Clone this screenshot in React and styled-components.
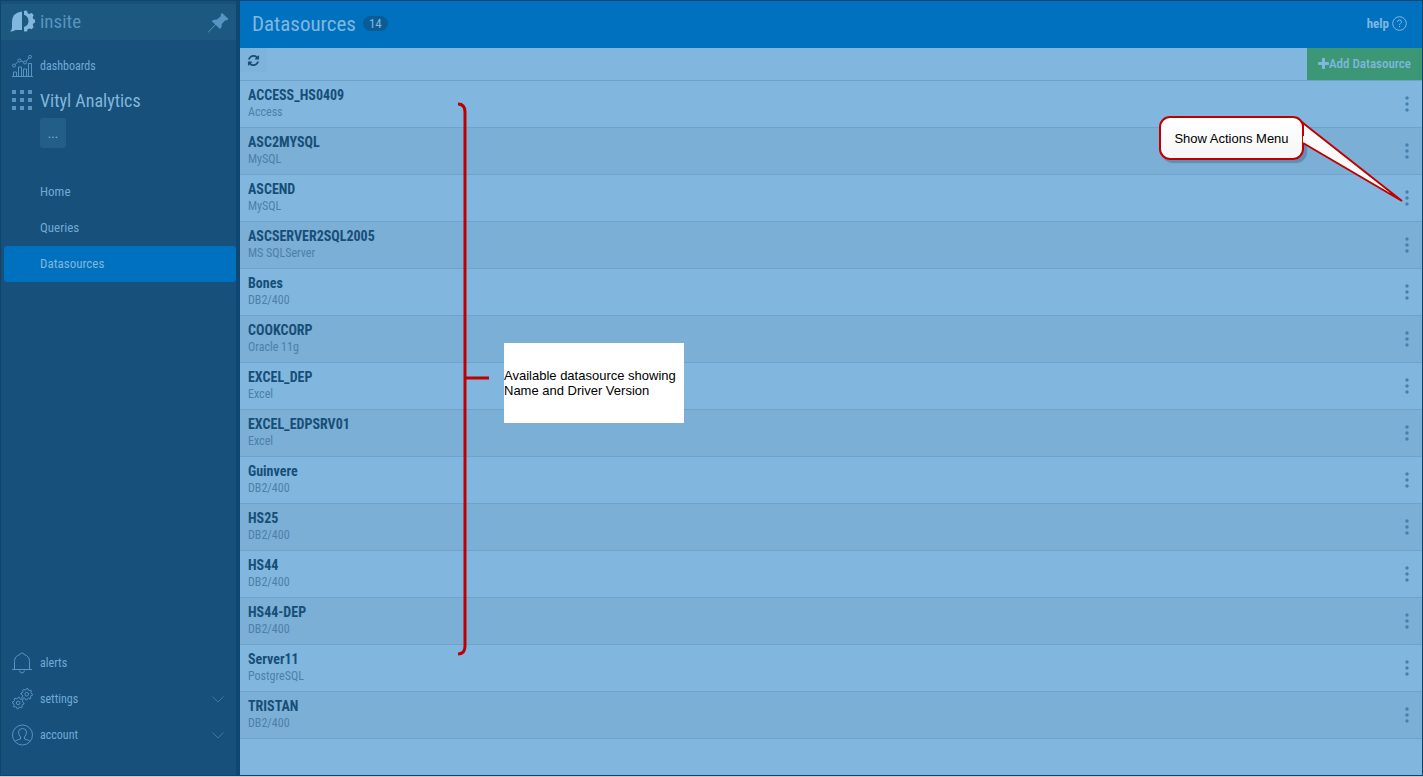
import React from "react";
import styled, { createGlobalStyle } from "styled-components";

const c = {
  side: "#17507a", sideTop: "#1c5880", edge: "#0e4771", frame: "#0f456b",
  blue: "#0071bf", body: "#81b7de", alt: "#7bafd5", line: "#6fa3cb",
  ink: "#174e78", sub: "#4c80a9", pale: "#6fabd7", light: "#81b7de",
  dim: "#5794c1", red: "#c00000", green: "#3b9775",
};

const Global = createGlobalStyle`
  *, *::before, *::after { box-sizing: border-box; }
  body { margin: 0; background: #c8c8c8; font-family: "Roboto Condensed", "Liberation Sans Narrow", "Liberation Sans", sans-serif; font-size: 13px; color: ${c.ink}; }
  button { font: inherit; color: inherit; border: 0; padding: 0; background: none; cursor: pointer; }
  a { color: inherit; text-decoration: none; }
  h1, h2, h3, p, ul { margin: 0; padding: 0; }
  svg { display: block; flex: none; }
`;

const Shell = styled.div`
  display: flex;
  min-height: calc(100vh - 1px);
  border: 1px solid ${c.frame};
  border-width: 1px 1px 1px 0;
`;

const Sidebar = styled.aside`
  width: 240px;
  flex: none;
  display: flex;
  flex-direction: column;
  background: ${c.side};
  border-left: 1px solid ${c.frame};
  border-right: 4px solid ${c.edge};
  color: ${c.pale};
`;

const Brand = styled.div`
  height: 39px;
  display: flex;
  align-items: center;
  gap: 5px;
  padding: 0 7px 0 9px;
  border-top: 3px solid ${c.side};
  background: ${c.sideTop};
  font-size: 19px;
  line-height: 22px;
  color: ${c.dim};
`;

const Pin = styled.button`
  margin-left: auto;
`;

const MainNav = styled.nav`
  padding-top: 8px;
  flex: 1;
`;

const NavItem = styled.a`
  display: flex;
  align-items: center;
  gap: 6px;
  height: 36px;
  padding: 0 12px 0 11px;
  font-size: 12px;
  svg { color: ${c.dim}; }
  svg:nth-of-type(2) { margin-left: auto; }
`;

const Product = styled(NavItem)`
  height: 34px;
  padding-bottom: 2px;
  font-size: 18px;
  color: ${c.light};
`;

const MoreButton = styled.button`
  display: block;
  width: 26px;
  height: 30px;
  margin: 0 0 26px 39px;
  border-radius: 3px;
  background: #225e88;
  color: ${c.light};
`;

const SubItem = styled.a`
  display: flex;
  align-items: center;
  height: 36px;
  margin: 0 0 0 3px;
  padding: 0 36px 2px;
  border-radius: 3px;
  background: ${(p) => (p.$active ? c.blue : "transparent")};
  color: ${(p) => (p.$active ? c.light : c.pale)};
`;

const FootNav = styled.nav`
  padding-bottom: 22px;
`;

const Main = styled.main`
  flex: 1;
  min-width: 0;
  display: flex;
  flex-direction: column;
  background: ${c.body};
`;

const Header = styled.header`
  height: 47px;
  display: flex;
  align-items: center;
  padding: 0 15px 2px 12px;
  background: ${c.blue};
  color: ${c.light};
`;

const Title = styled.h1`
  font-size: 21px;
  line-height: 24px;
  font-weight: 400;
`;

const Count = styled.span`
  margin-left: 7px;
  padding: 0 6px;
  border-radius: 8px;
  line-height: 15px;
  background: #0b5c95;
`;

const Help = styled.a`
  margin-left: auto;
  display: flex;
  align-items: center;
  gap: 3px;
  font-weight: 700;
`;

const Toolbar = styled.div`
  display: flex;
  justify-content: space-between;
  height: 33px;
  border-bottom: 1px solid ${c.line};
`;

const Refresh = styled.button`
  width: 27px;
  height: 24px;
  display: flex;
  align-items: center;
  justify-content: center;
  background: #7eb4db;
  color: ${c.ink};
`;

const AddButton = styled.button`
  display: flex;
  align-items: center;
  padding: 0 11px 2px;
  background: ${c.green};
  color: ${c.light};
  font-weight: 500;
`;

const Stage = styled.div`
  position: relative;
  flex: 1;
`;

const List = styled.ul`
  list-style: none;
`;

const Row = styled.li`
  display: flex;
  align-items: center;
  justify-content: space-between;
  height: 47px;
  padding: 0 8px;
  border-bottom: 1px solid ${c.line};
  &:nth-child(even) { background: ${c.alt}; }
`;

const Source = styled.div`
  padding-bottom: 2px;
`;

const Name = styled.h2`
  font-size: 14px;
  line-height: 17px;
  font-weight: 700;
`;

const Driver = styled.p`
  font-size: 12px;
  line-height: 16px;
  color: ${c.sub};
`;

const Actions = styled.button`
  width: 14px;
  height: 24px;
  display: flex;
  align-items: center;
  justify-content: center;
  color: #4680ac;
`;

const Bracket = styled.svg`
  position: absolute;
  left: 216px;
  top: 21px;
`;

const Note = styled.p`
  position: absolute;
  left: 264px;
  top: 262px;
  width: 180px;
  height: 80px;
  padding-top: 25px;
  background: #fff;
  color: #000;
  font: 13px/15px "Liberation Sans", Arial, sans-serif;
  white-space: nowrap;
`;

const Callout = styled.div`
  position: absolute;
  right: 118px;
  top: 35px;
  width: 145px;
  height: 44px;
  display: flex;
  align-items: center;
  justify-content: center;
  border: 2px solid ${c.red};
  border-radius: 11px;
  background: linear-gradient(#fff, #f6f6f6);
  box-shadow: 3px 3px 1px rgba(40, 80, 115, 0.35);
  color: #000;
  font: 13px/15px "Liberation Sans", Arial, sans-serif;
  white-space: nowrap;
`;

const Tail = styled.svg`
  position: absolute;
  right: 18px;
  top: 39px;
`;

const Logo = () => (
  <svg width="25" height="24" viewBox="0 0 25 24" fill={c.light} aria-hidden="true">
    <path d="M12 1.500V20H5.500Q3 21.500 0 21.500q2-1.500 2-4V11.500Q2.500 2.500 12 1.500z" />
    <path d="M14 1q2.500-1 3.200.3l.5 1.900 1.700.7 2-.9q1.800.8 2.200 2.300l-.9 1.900.6 1.700 1.500.6q.7 1.500 0 3.300l-1.500.6-.6 1.700.9 2q-.6 1.500-2.200 2.200l-2-.8-1.700.7-.6 2q-1.500.8-3.100 0v-4.200q4.500-1.500 4.500-6t-4.500-6.200z" />
  </svg>
);

const PinIcon = () => (
  <svg width="21" height="21" viewBox="0 0 21 21" aria-hidden="true">
    <path d="M0 20.500L8 12" stroke="currentColor" />
    <path fill="currentColor" d="M14 1l6.500 6-2 1.500-1.200-.3-3.500 3.800q.6 3-1.800 5L3.500 9Q6 7 9 7.500l4-3.600-.4-1.300z" />
  </svg>
);

const Outline = ({ children, size = 22 }) => (
  <svg width={size} height={size} viewBox="0 0 22 22" fill="none" stroke="currentColor" strokeWidth="1" aria-hidden="true">
    {children}
  </svg>
);

const ChartIcon = () => (
  <Outline>
    <path d="M0 21.500h21M1.500 21v-4h3v4M6.500 21v-9h3v9M11.500 21v-7h3v7M16.500 21V8.500h3V21M3.200 9.500l3-3M9 6l2.500 1M14 6.500l3-3.500" />
    <circle cx="2" cy="10.500" r="1.500" /><circle cx="7.500" cy="5.500" r="1.500" /><circle cx="13" cy="7.500" r="1.500" /><circle cx="18" cy="1.800" r="1.500" />
  </Outline>
);

const GridIcon = () => (
  <svg width="22" height="22" viewBox="0 0 22 22" fill="currentColor" aria-hidden="true">
    {[1, 9, 17].map((y) => [0, 8, 16].map((x) => <rect key={x + "-" + y} x={x} y={y} width="4" height="4" />))}
  </svg>
);

const BellIcon = () => (
  <Outline>
    <path d="M0 17.500h20M2.500 17.500V9.500Q2.500 4 8 2.500 8 1 10 1t2 1.500q5.500 1.500 5.500 7v8M7.500 18.500q.5 2.500 2.500 2.500t2.500-2.500" />
  </Outline>
);

const gear = Array.from({ length: 32 }, (_, i) => {
  const r = i % 4 < 2 ? 5.8 : 4.4;
  const a = (i * Math.PI) / 16;
  return `${(r * Math.cos(a)).toFixed(2)},${(r * Math.sin(a)).toFixed(2)}`;
}).join(" ");

const GearsIcon = () => (
  <Outline>
    <g transform="translate(14.700 6.200)"><polygon points={gear} /><circle r="1.800" /></g>
    <g transform="translate(6.200 15)"><polygon points={gear} /><circle r="1.800" /></g>
  </Outline>
);

const UserIcon = () => (
  <Outline>
    <circle cx="10.500" cy="11" r="10" />
    <path d="M3 17.500q1-1.500 5.500-2.500v-2Q6.500 11 6.500 8q0-3.500 4-3.500t4 3.500q0 3-2 5v2q4.500 1 5.500 2.500" />
  </Outline>
);

const Chevron = () => (
  <svg width="12" height="7" viewBox="0 0 12 7" fill="none" stroke="#3b78a5" aria-hidden="true">
    <path d="M.5.500L6 6 11.500.500" />
  </svg>
);

const RefreshIcon = () => (
  <svg width="13" height="13" viewBox="0 0 1792 1792" fill="currentColor" aria-hidden="true">
    <path d="M1639 1056q0 5-1 7-64 268-268 434.500t-478 166.500q-146 0-282.500-55t-243.500-157l-129 129q-19 19-45 19t-45-19-19-45v-448q0-26 19-45t45-19h448q26 0 45 19t19 45-19 45l-137 137q71 66 161 102t187 36q134 0 250-65t186-179q11-17 53-117 8-23 30-23h192q13 0 22.500 9.500t9.500 22.500zm25-800v448q0 26-19 45t-45 19h-448q-26 0-45-19t-19-45 19-45l138-138q-148-137-349-137-134 0-250 65t-186 179q-11 17-53 117-8 23-30 23h-199q-13 0-22.500-9.500t-9.500-22.500v-7q65-268 270-434.500t480-166.500q146 0 284 55.500t245 156.500l130-129q19-19 45-19t45 19 19 45z" />
  </svg>
);

const PlusIcon = () => (
  <svg width="11" height="11" viewBox="192 128 1408 1408" fill="currentColor" aria-hidden="true">
    <path d="M1600 736v192q0 40-28 68t-68 28h-416v416q0 40-28 68t-68 28h-192q-40 0-68-28t-28-68v-416h-416q-40 0-68-28t-28-68v-192q0-40 28-68t68-28h416v-416q0-40 28-68t68-28h192q40 0 68 28t28 68v416h416q40 0 68 28t28 68z" />
  </svg>
);

const HelpIcon = () => (
  <svg width="15" height="15" viewBox="0 0 15 15" fill="none" stroke="currentColor" aria-hidden="true">
    <circle cx="7.500" cy="7.500" r="6.800" />
    <path d="M5.500 6q0-2 2-2t2 1.800q0 1-1 1.500t-1 1.700M7.500 10v1.200" />
  </svg>
);

const DotsIcon = () => (
  <svg width="4" height="16" viewBox="0 0 4 16" fill="currentColor" aria-hidden="true">
    <circle cx="2" cy="2" r="1.700" /><circle cx="2" cy="8" r="1.700" /><circle cx="2" cy="14" r="1.700" />
  </svg>
);

const sources = [
  ["ACCESS_HS0409", "Access"], ["ASC2MYSQL", "MySQL"], ["ASCEND", "MySQL"],
  ["ASCSERVER2SQL2005", "MS SQLServer"], ["Bones", "DB2/400"], ["COOKCORP", "Oracle 11g"],
  ["EXCEL_DEP", "Excel"], ["EXCEL_EDPSRV01", "Excel"], ["Guinvere", "DB2/400"],
  ["HS25", "DB2/400"], ["HS44", "DB2/400"], ["HS44-DEP", "DB2/400"],
  ["Server11", "PostgreSQL"], ["TRISTAN", "DB2/400"],
];

export default function App() {
  return (
    <>
      <Global />
      <Shell>
        <Sidebar>
          <Brand><Logo />insite<Pin aria-label="Pin menu"><PinIcon /></Pin></Brand>
          <MainNav>
            <NavItem href="#dashboards"><ChartIcon />dashboards</NavItem>
            <Product href="#analytics"><GridIcon />Vityl Analytics</Product>
            <MoreButton>...</MoreButton>
            <SubItem href="#home">Home</SubItem>
            <SubItem href="#queries">Queries</SubItem>
            <SubItem href="#datasources" $active>Datasources</SubItem>
          </MainNav>
          <FootNav>
            <NavItem href="#alerts"><BellIcon />alerts</NavItem>
            <NavItem href="#settings"><GearsIcon />settings<Chevron /></NavItem>
            <NavItem href="#account"><UserIcon />account<Chevron /></NavItem>
          </FootNav>
        </Sidebar>
        <Main>
          <Header>
            <Title>Datasources</Title>
            <Count>{sources.length}</Count>
            <Help href="#help">help<HelpIcon /></Help>
          </Header>
          <Toolbar>
            <Refresh aria-label="Refresh"><RefreshIcon /></Refresh>
            <AddButton><PlusIcon />Add Datasource</AddButton>
          </Toolbar>
          <Stage>
            <List>
              {sources.map(([name, driver]) => (
                <Row key={name}>
                  <Source><Name>{name}</Name><Driver>{driver}</Driver></Source>
                  <Actions aria-label={"Show actions for " + name}><DotsIcon /></Actions>
                </Row>
              ))}
            </List>
            <Bracket width="36" height="556" viewBox="0 0 36 556" fill="none" stroke={c.red} strokeWidth="3" aria-hidden="true">
              <path d="M2 2q7 0 7 8v534q0 8-7 8M9 276h24" />
            </Bracket>
            <Note>Available datasource showing<br />Name and Driver Version</Note>
            <Callout>Show Actions Menu</Callout>
            <Tail width="102" height="84" viewBox="0 0 102 84" aria-hidden="true">
              <path d="M1 3l99 78L1 23z" fill="#fafafa" />
              <path d="M1 16V3l99 78L1 23" fill="none" stroke={c.red} strokeWidth="2" />
            </Tail>
          </Stage>
        </Main>
      </Shell>
    </>
  );
}
